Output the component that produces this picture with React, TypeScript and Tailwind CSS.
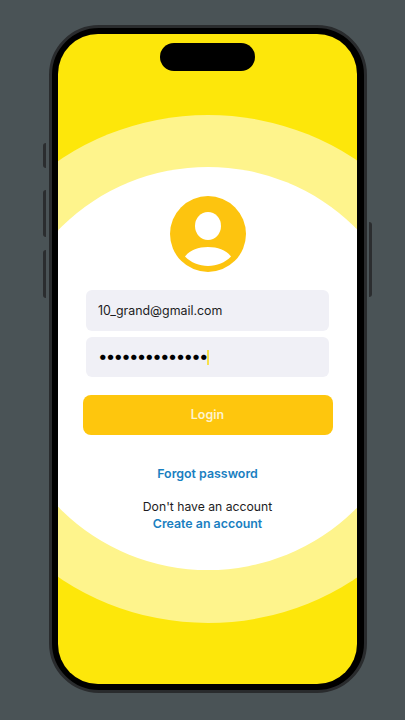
const font = { fontFamily: "Inter, 'Noto Sans', sans-serif" };

function Avatar() {
  return (
    <svg viewBox="0 0 76 76" className="block h-[76px] w-[76px]">
      <circle cx="38" cy="38" r="38" fill="#fdc40f" />
      <ellipse cx="38" cy="30" rx="13" ry="14" fill="#fff" />
      <path d="M15 60.5C20 54 28 51 38 51S56 54 61 60.5C55 66.5 47 70 38 70S21 66.5 15 60.5Z" fill="#fff" />
    </svg>
  );
}

export default function App() {
  return (
    <div className="h-[720px] w-[405px] overflow-hidden bg-[#4a5356] pl-[49px] pt-[25px]" style={font}>
      <div className="relative h-[668px] w-[318px] rounded-[50px] border-[3px] border-[#292b2d] bg-black pb-[6px] pl-[6px] pr-[7px] pt-[6px]">
        {/* side buttons */}
        <div className="absolute left-[-9px] top-[115px] h-[25px] w-[3px] rounded-l-sm bg-[#2b2d2f]" />
        <div className="absolute left-[-9px] top-[162px] h-[47px] w-[3px] rounded-l-sm bg-[#2b2d2f]" />
        <div className="absolute left-[-9px] top-[222px] h-[48px] w-[3px] rounded-l-sm bg-[#2b2d2f]" />
        <div className="absolute right-[-8px] top-[194px] h-[75px] w-[3px] rounded-r-sm bg-[#2b2d2f]" />

        <div className="relative flex h-[650px] w-[299px] flex-col items-center overflow-hidden rounded-[40px] bg-[#fde70a]">
          {/* background circles */}
          <div className="absolute left-[-111.5px] top-[81px] h-[508px] w-[522px] rounded-[50%] bg-[#fef48c]" />
          <div className="absolute left-[-56.5px] top-[133px] h-[403px] w-[412px] rounded-[50%] bg-white" />

          <div className="relative mt-[9px] h-[28px] w-[95px] rounded-full bg-black" />

          <div className="relative mt-[125px]">
            <Avatar />
          </div>

          <div className="relative mt-[18px] flex h-[41px] w-[243px] items-center rounded-[6px] bg-[#f0f0f6] pl-[12px] pt-[1px] text-[12.4px] text-[#1c1c1e]">
            10_grand@gmail.com
          </div>
          <div className="relative mt-[6px] flex h-[40px] w-[243px] items-center rounded-[6px] bg-[#f0f0f6] pl-[12px] text-[17px] text-black">
            <span className="tracking-[-1.8px]">••••••••••••••</span>
            <span className="ml-[0.5px] h-[15px] w-[2px] bg-[#f7e04a]" />
          </div>

          <button className="relative mt-[18px] h-[40px] w-[250px] rounded-[8px] bg-[#fec60d] pt-[1px] text-[12.5px] font-semibold text-[#fdf3cf]">
            Login
          </button>

          <p className="relative mt-[30px] text-[12.4px] font-semibold leading-[18px] text-[#1a7fc1]">Forgot password</p>
          <p className="relative mt-[15px] text-[12.2px] leading-[17px] text-[#1c1c1e]">Don't have an account</p>
          <p className="relative text-[12.4px] font-semibold leading-[17px] text-[#1a7fc1]">Create an account</p>
        </div>
      </div>
    </div>
  );
}
